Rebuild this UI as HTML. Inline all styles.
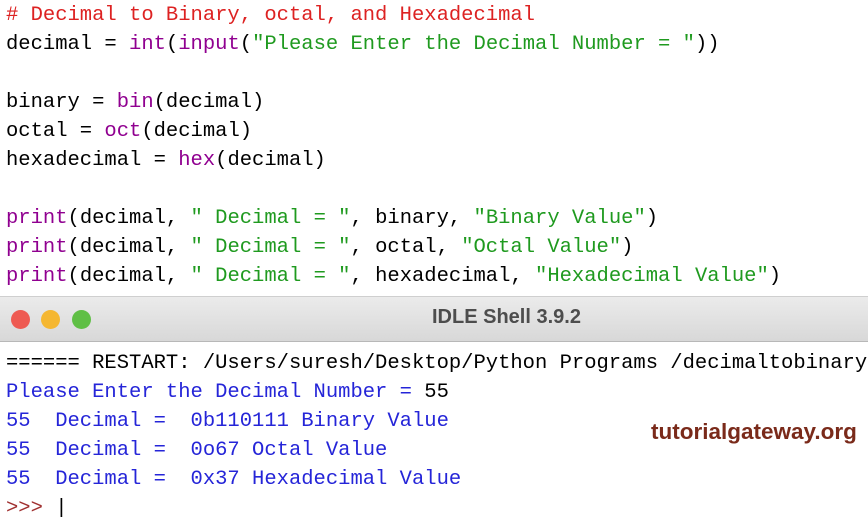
<!DOCTYPE html>
<html><head><meta charset="utf-8"><style>
body{margin:0;width:868px;height:508px;overflow:hidden;background:#fff;position:relative;font-family:"Liberation Mono",monospace;}
.l{position:absolute;left:6px;font-size:20.5px;line-height:29px;white-space:pre;color:#000;}
.c{color:#dd2222}.k{color:#900090}.s{color:#1f9a1f}.b{color:#2525d8}.p{color:#a03030}
#bar{position:absolute;left:0;top:296px;width:868px;height:44px;background:linear-gradient(#ebebeb,#d8d8d8);border-top:1px solid #cfcfcf;border-bottom:1px solid #b8b8b8;}
.dot{position:absolute;top:13px;width:19px;height:19px;border-radius:50%;}
#title{position:absolute;left:432px;top:9px;font:bold 20px "Liberation Sans",sans-serif;color:#4d4d4d;}
#logo{position:absolute;left:651px;top:419px;font:bold 22.5px "Liberation Sans",sans-serif;color:#7a2a1a;}
</style></head><body>
<div class="l" style="top:1px"><span class="c"># Decimal to Binary, octal, and Hexadecimal</span></div>
<div class="l" style="top:30px">decimal = <span class="k">int</span>(<span class="k">input</span>(<span class="s">"Please Enter the Decimal Number = "</span>))</div>
<div class="l" style="top:88px">binary = <span class="k">bin</span>(decimal)</div>
<div class="l" style="top:117px">octal = <span class="k">oct</span>(decimal)</div>
<div class="l" style="top:146px">hexadecimal = <span class="k">hex</span>(decimal)</div>
<div class="l" style="top:204px"><span class="k">print</span>(decimal, <span class="s">" Decimal = "</span>, binary, <span class="s">"Binary Value"</span>)</div>
<div class="l" style="top:233px"><span class="k">print</span>(decimal, <span class="s">" Decimal = "</span>, octal, <span class="s">"Octal Value"</span>)</div>
<div class="l" style="top:262px"><span class="k">print</span>(decimal, <span class="s">" Decimal = "</span>, hexadecimal, <span class="s">"Hexadecimal Value"</span>)</div>
<div id="bar">
<div class="dot" style="left:11px;background:#ee5a52"></div>
<div class="dot" style="left:41px;background:#f5b731"></div>
<div class="dot" style="left:72px;background:#5fbf45"></div>
<div id="title">IDLE Shell 3.9.2</div>
</div>
<div class="l" style="top:349px">====== RESTART: /Users/suresh/Desktop/Python Programs /decimaltobinary</div>
<div class="l b" style="top:378px">Please Enter the Decimal Number = <span style="color:#000">55</span></div>
<div class="l b" style="top:407px">55  Decimal =  0b110111 Binary Value</div>
<div class="l b" style="top:436px">55  Decimal =  0o67 Octal Value</div>
<div class="l b" style="top:465px">55  Decimal =  0x37 Hexadecimal Value</div>
<div class="l p" style="top:494px">&gt;&gt;&gt; <span style="color:#000">|</span></div>
<div id="logo">tutorialgateway.org</div>
</body></html>
